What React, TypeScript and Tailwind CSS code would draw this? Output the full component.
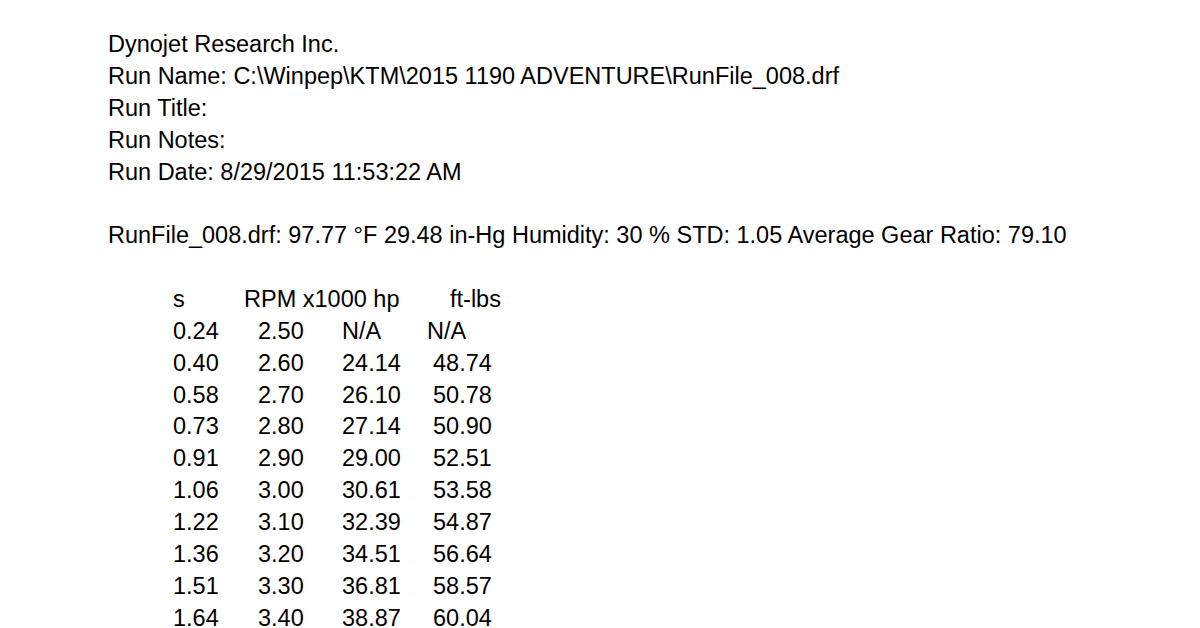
import React from "react";

const rows: [string, string, string, string][] = [
  ["0.24", "2.50", "N/A", "N/A"],
  ["0.40", "2.60", "24.14", "48.74"],
  ["0.58", "2.70", "26.10", "50.78"],
  ["0.73", "2.80", "27.14", "50.90"],
  ["0.91", "2.90", "29.00", "52.51"],
  ["1.06", "3.00", "30.61", "53.58"],
  ["1.22", "3.10", "32.39", "54.87"],
  ["1.36", "3.20", "34.51", "56.64"],
  ["1.51", "3.30", "36.81", "58.57"],
  ["1.64", "3.40", "38.87", "60.04"],
];

export default function App() {
  return (
    <div
      className="w-[1200px] h-[628px] overflow-hidden bg-white text-black text-[23.5px] leading-[31.87px] pt-[29px]"
      style={{ fontFamily: '"Liberation Sans", Arial, sans-serif' }}
    >
      <div className="pl-[108px]">
        <div>Dynojet Research Inc.</div>
        <div>Run Name: C:\Winpep\KTM\2015 1190 ADVENTURE\RunFile_008.drf</div>
        <div>Run Title:</div>
        <div>Run Notes:</div>
        <div>Run Date: 8/29/2015 11:53:22 AM</div>
        <div className="h-[31.87px]" />
        <div className="whitespace-nowrap">
          RunFile_008.drf: 97.77 °F 29.48 in-Hg Humidity: 30 % STD: 1.05 Average Gear Ratio: 79.10
        </div>
        <div className="h-[31.87px]" />
      </div>
      <div className="pl-[173px]">
        <div className="grid grid-cols-[71px_206px_auto]">
          <div>s</div>
          <div className="whitespace-nowrap">RPM x1000 hp</div>
          <div>ft-lbs</div>
        </div>
        {rows.map((r, i) => (
          <div key={i} className="grid grid-cols-[85px_84px_91px_auto]">
            <div>{r[0]}</div>
            <div>{r[1]}</div>
            <div>{r[2]}</div>
            <div className={r[3] === "N/A" ? "-ml-[6px]" : ""}>{r[3]}</div>
          </div>
        ))}
      </div>
    </div>
  );
}
